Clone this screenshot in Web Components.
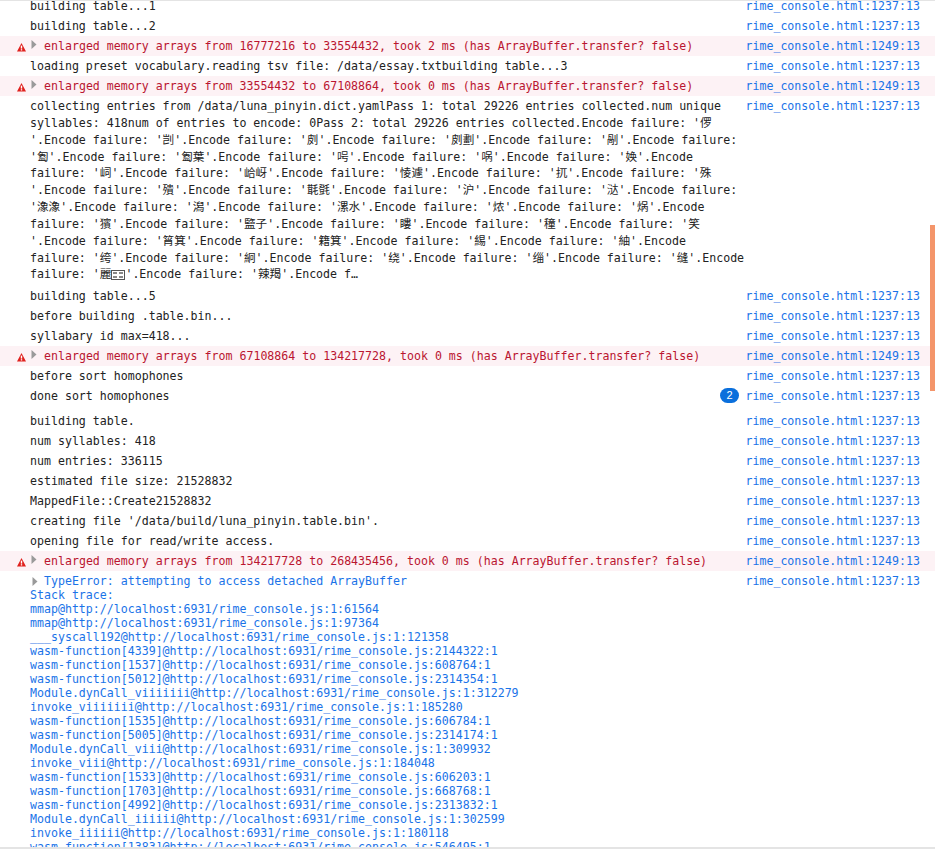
<!DOCTYPE html>
<html>
<head>
<meta charset="utf-8">
<title>rime console</title>
<style>
	html, body { margin: 0; height: 100%; overflow: hidden; background: #fff; }
	console-view { height: 849px; }
	.tofu { vertical-align: -2px; }
</style>
</head>
<body>
<console-view>
	<console-row source="rime_console.html:1237:13" style="margin-top:-5px">building table...1</console-row>
	<console-row source="rime_console.html:1237:13">building table...2</console-row>
	<console-row level="warn" source="rime_console.html:1249:13">enlarged memory arrays from 16777216 to 33554432, took 2 ms (has ArrayBuffer.transfer? false)</console-row>
	<console-row source="rime_console.html:1237:13">loading preset vocabulary.reading tsv file: /data/essay.txtbuilding table...3</console-row>
	<console-row level="warn" source="rime_console.html:1249:13">enlarged memory arrays from 33554432 to 67108864, took 0 ms (has ArrayBuffer.transfer? false)</console-row>
	<console-row source="rime_console.html:1237:13" style="--line:16.85px;padding-bottom:2.65px">collecting entries from /data/luna_pinyin.dict.yamlPass 1: total 29226 entries collected.num unique<br>syllables: 418num of entries to encode: 0Pass 2: total 29226 entries collected.Encode failure: '㑩<br>'.Encode failure: '剀'.Encode failure: '㓟'.Encode failure: '㓟劃'.Encode failure: '剮'.Encode failure:<br>'㔩'.Encode failure: '㔩葉'.Encode failure: '呺'.Encode failure: '㖞'.Encode failure: '㛟'.Encode<br>failure: '㟃'.Encode failure: '峆岈'.Encode failure: '㥄遽'.Encode failure: '扤'.Encode failure: '殊<br>'.Encode failure: '殨'.Encode failure: '㲨㲪'.Encode failure: '沪'.Encode failure: '㳠'.Encode failure:<br>'潒潒'.Encode failure: '潟'.Encode failure: '漯水'.Encode failure: '㶶'.Encode failure: '㶽'.Encode<br>failure: '獱'.Encode failure: '盬子'.Encode failure: '瞜'.Encode failure: '穜'.Encode failure: '笑<br>'.Encode failure: '筲箕'.Encode failure: '籍箕'.Encode failure: '緆'.Encode failure: '紬'.Encode<br>failure: '绔'.Encode failure: '絅'.Encode failure: '绕'.Encode failure: '缁'.Encode failure: '缝'.Encode<br>failure: '麗<svg class="tofu" width="14" height="10" viewBox="0 0 14 10"><rect x=".5" y=".5" width="13" height="9" fill="#fff" stroke="#555"/><path d="M2 2h4v2H2zM8 2h4v2H8zM2 6h4v2H2zM8 6h4v2H8z" fill="#888"/></svg>'.Encode failure: '辣羯'.Encode f…</console-row>
	<console-row source="rime_console.html:1237:13">building table...5</console-row>
	<console-row source="rime_console.html:1237:13">before building .table.bin...</console-row>
	<console-row source="rime_console.html:1237:13">syllabary id max=418...</console-row>
	<console-row level="warn" source="rime_console.html:1249:13">enlarged memory arrays from 67108864 to 134217728, took 0 ms (has ArrayBuffer.transfer? false)</console-row>
	<console-row source="rime_console.html:1237:13">before sort homophones</console-row>
	<console-row source="rime_console.html:1237:13" count="2">done sort homophones</console-row>
	<console-row source="rime_console.html:1237:13">building table.</console-row>
	<console-row source="rime_console.html:1237:13">num syllables: 418</console-row>
	<console-row source="rime_console.html:1237:13">num entries: 336115</console-row>
	<console-row source="rime_console.html:1237:13">estimated file size: 21528832</console-row>
	<console-row source="rime_console.html:1237:13">MappedFile::Create21528832</console-row>
	<console-row source="rime_console.html:1237:13">creating file '/data/build/luna_pinyin.table.bin'.</console-row>
	<console-row source="rime_console.html:1237:13">opening file for read/write access.</console-row>
	<console-row level="warn" source="rime_console.html:1249:13">enlarged memory arrays from 134217728 to 268435456, took 0 ms (has ArrayBuffer.transfer? false)</console-row>
	<console-row level="trace" source="rime_console.html:1237:13">TypeError: attempting to access detached ArrayBuffer<stack-trace slot="trace">Stack trace:
mmap@http://localhost:6931/rime_console.js:1:61564
mmap@http://localhost:6931/rime_console.js:1:97364
___syscall192@http://localhost:6931/rime_console.js:1:121358
wasm-function[4339]@http://localhost:6931/rime_console.js:2144322:1
wasm-function[1537]@http://localhost:6931/rime_console.js:608764:1
wasm-function[5012]@http://localhost:6931/rime_console.js:2314354:1
Module.dynCall_viiiiiii@http://localhost:6931/rime_console.js:1:312279
invoke_viiiiiii@http://localhost:6931/rime_console.js:1:185280
wasm-function[1535]@http://localhost:6931/rime_console.js:606784:1
wasm-function[5005]@http://localhost:6931/rime_console.js:2314174:1
Module.dynCall_viii@http://localhost:6931/rime_console.js:1:309932
invoke_viii@http://localhost:6931/rime_console.js:1:184048
wasm-function[1533]@http://localhost:6931/rime_console.js:606203:1
wasm-function[1703]@http://localhost:6931/rime_console.js:668768:1
wasm-function[4992]@http://localhost:6931/rime_console.js:2313832:1
Module.dynCall_iiiiii@http://localhost:6931/rime_console.js:1:302599
invoke_iiiiii@http://localhost:6931/rime_console.js:1:180118
wasm-function[1383]@http://localhost:6931/rime_console.js:546495:1</stack-trace></console-row>
</console-view>
<script>
	class ConsoleView extends HTMLElement {
		constructor() {
			super();
			this.attachShadow({ mode: "open" });
			this.shadowRoot.innerHTML = `
				<style>
					:host {
						display: block;
						position: relative;
						overflow: hidden;
						box-sizing: border-box;
						border-top: 1px solid #e4e4e4;
						border-bottom: 2px solid #e4e4e4;
						font: 11.6px "DejaVu Sans Mono", "Noto Sans CJK SC", monospace;
						color: #222;
					}
					.thumb {
						position: absolute;
						top: 224px;
						right: 0;
						width: 5px;
						height: 166px;
						background: #f4956a;
					}
				</style>
				<slot></slot>
				<div class="thumb"></div>
			`;
		}
	}

	/**
	 * One console message: icon column, text, repeat badge and source link
	 */
	class ConsoleRow extends HTMLElement {
		connectedCallback() {
			if (this.shadowRoot) return;
			this.attachShadow({ mode: "open" });
			const level = this.getAttribute("level");
			const count = this.getAttribute("count");
			const warnIcon = `<svg class="icon" width="9" height="9" viewBox="0 0 9 9"><path d="M4.5 0 9 8.5H0Z" fill="#e0201c"/><rect x="3.8" y="2.6" width="1.4" height="3" fill="#fff"/><rect x="3.8" y="6.2" width="1.4" height="1.3" fill="#fff"/></svg>`;
			const arrow = `<svg class="arrow" width="6" height="9" viewBox="0 0 6 9"><path d="M0.5 0 5.5 4.5 0.5 9Z" fill="#9a9a9a"/></svg>`;
			this.shadowRoot.innerHTML = `
				<style>
					:host {
						display: block;
						position: relative;
						padding: 2px 15px 1px 30px;
					}
					:host([level="warn"]) {
						background: #fdf2f5;
						color: #ba1530;
					}
					:host([level="trace"]) {
						color: #1a73e8;
					}
					:host([count]) {
						padding-bottom: 6px;
					}
					.main {
						display: flex;
						align-items: flex-start;
						justify-content: space-between;
					}
					.text {
						width: 715px;
						flex: none;
						line-height: var(--line, 17px);
						white-space: nowrap;
					}
					:host([level="warn"]) .text,
					:host([level="trace"]) .text {
						padding-left: 14px;
						box-sizing: border-box;
					}
					.source {
						color: #1a73e8;
						line-height: 17px;
						white-space: nowrap;
						flex: none;
					}
					.icon {
						position: absolute;
						left: 16.5px;
						top: 7px;
					}
					.arrow {
						position: absolute;
						left: 31px;
						top: 4px;
					}
					:host([level="trace"]) .arrow {
						left: 32px;
						top: 6px;
					}
					.badge {
						position: absolute;
						left: 720px;
						top: 2px;
						width: 19px;
						height: 15px;
						border-radius: 8px;
						background: #0a6fdc;
						color: #fff;
						font: 11px/15px "Liberation Sans", sans-serif;
						text-align: center;
					}
				</style>
				${level === "warn" ? warnIcon : ""}
				${level ? arrow : ""}
				<div class="main">
					<div class="text"><slot></slot></div>
					<div class="source">${this.getAttribute("source")}</div>
				</div>
				${count ? `<span class="badge">${count}</span>` : ""}
				<slot name="trace"></slot>
			`;
		}
	}

	/**
	 * Preformatted stack trace below a message
	 */
	class StackTrace extends HTMLElement {
		constructor() {
			super();
			this.attachShadow({ mode: "open" });
			// no whitespace around the slot, the host is white-space: pre
			this.shadowRoot.innerHTML = `<style>:host { display: block; white-space: pre; line-height: 14px; color: #1a73e8; margin-top: -2px; }</style><slot></slot>`;
		}
	}

	customElements.define("console-view", ConsoleView);
	customElements.define("console-row", ConsoleRow);
	customElements.define("stack-trace", StackTrace);
</script>
</body>
</html>
